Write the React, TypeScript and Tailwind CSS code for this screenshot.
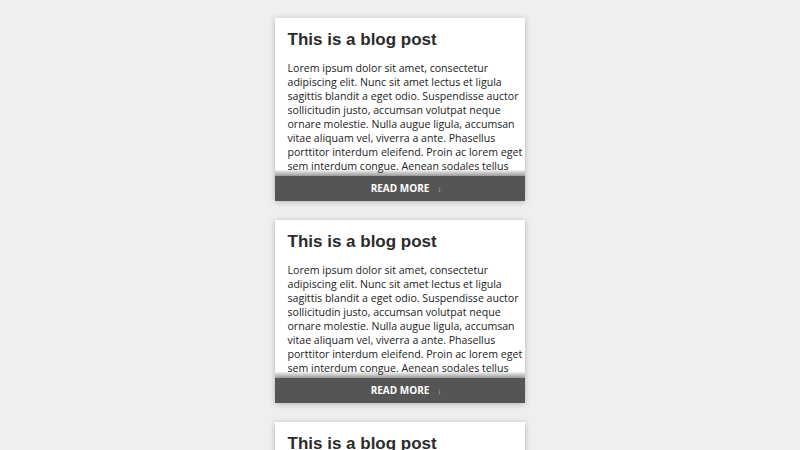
const LINES = [
  "Lorem ipsum dolor sit amet, consectetur",
  "adipiscing elit. Nunc sit amet lectus et ligula",
  "sagittis blandit a eget odio. Suspendisse auctor",
  "sollicitudin justo, accumsan volutpat neque",
  "ornare molestie. Nulla augue ligula, accumsan",
  "vitae aliquam vel, viverra a ante. Phasellus",
  "porttitor interdum eleifend. Proin ac lorem eget",
  "sem interdum congue. Aenean sodales tellus",
  "non augue condimentum, sit amet porta sapien",
  "tincidunt. Donec vel nulla at urna pulvinar.",
];

function PostCard() {
  return (
    <div className="relative w-[250px] h-[183px] shrink-0 mx-auto bg-white overflow-hidden shadow-[0_1px_6px_rgba(0,0,0,0.25)]">
      <div className="pl-[12.5px] pr-[6px] pt-[12px]">
        <h2 className="text-[17px] leading-[20px] font-bold text-[#2b2b2b] font-['Liberation_Sans',Arial,sans-serif]">
          This is a blog post
        </h2>
        <p className="mt-[11px] text-[10.6px] leading-[14px] text-[#222] font-['Open_Sans',sans-serif]">
          {LINES.map((l) => (
            <span key={l} className="block whitespace-nowrap">{l}</span>
          ))}
        </p>
      </div>
      {/* fade + button over the clipped text */}
      <div className="absolute left-0 right-0 bottom-0">
        <div className="h-[6px] bg-gradient-to-b from-[rgba(0,0,0,0.05)] to-[rgba(0,0,0,0.4)]" />
        <button className="w-full h-[25px] bg-[#555] flex items-center justify-center gap-[8px] pl-[12px] text-white font-['Open_Sans',sans-serif]">
          <span className="text-[10px] font-bold">READ MORE</span>
          <span className="text-[8px] text-[#bbb]">↓</span>
        </button>
      </div>
    </div>
  );
}

export default function App() {
  return (
    <div className="h-screen overflow-hidden bg-[#efefef] pt-[18px] flex flex-col gap-[19px]">
      <PostCard />
      <PostCard />
      <PostCard />
    </div>
  );
}
